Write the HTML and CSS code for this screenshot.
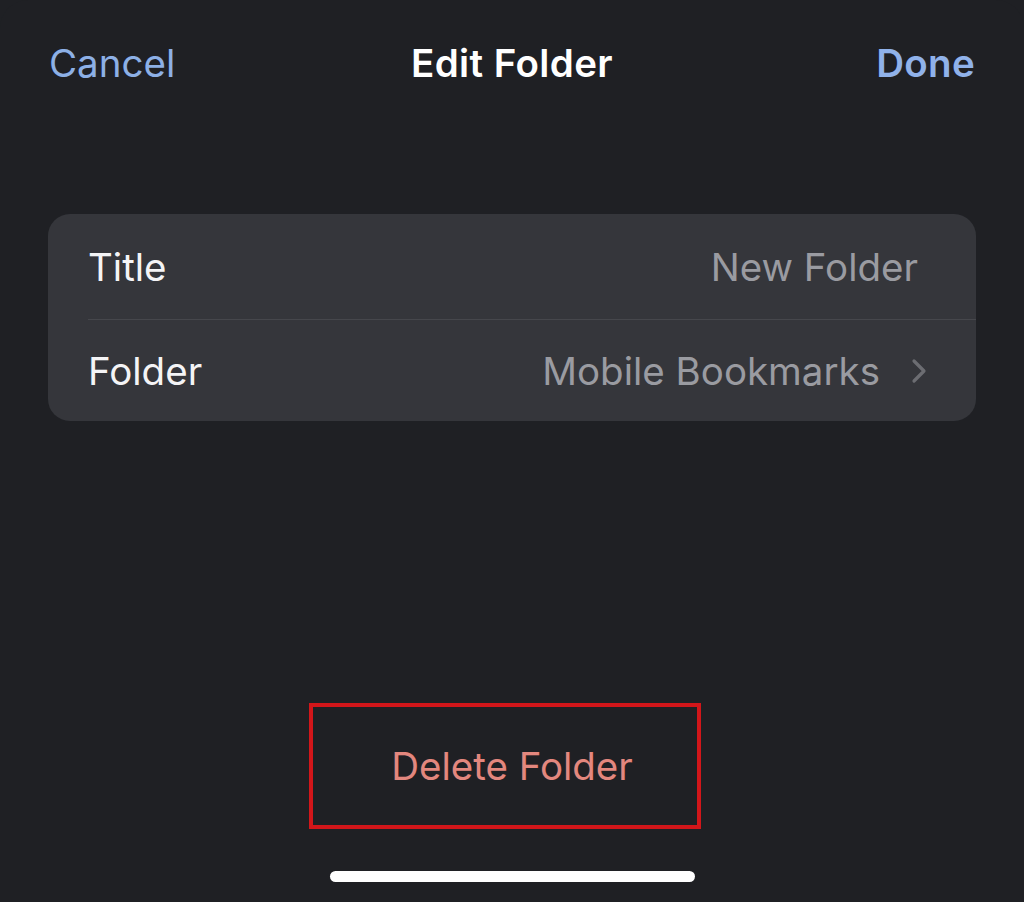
FILE: index.html
```html
<!DOCTYPE html>
<html>
<head>
<meta charset="utf-8">
<link rel="stylesheet" href="styles.css">
</head>
<body>
<div class="sheet">
  <header class="nav">
    <span class="nav-btn cancel">Cancel</span>
    <span class="nav-title">Edit Folder</span>
    <span class="nav-btn done">Done</span>
  </header>
  <section class="card">
    <div class="row row-title">
      <span class="label">Title</span>
      <span class="value">New Folder</span>
    </div>
    <div class="divider"></div>
    <div class="row row-folder">
      <span class="label">Folder</span>
      <span class="value">Mobile Bookmarks</span>
      <svg class="chev" width="18" height="28" viewBox="0 0 18 28"><path d="M4 4 L14 14 L4 24" fill="none" stroke="currentColor" stroke-width="3.2" stroke-linecap="round" stroke-linejoin="round"/></svg>
    </div>
  </section>
  <div class="spacer"></div>
  <div class="delete-box"><span class="delete">Delete Folder</span></div>
  <div class="home"></div>
</div>
</body>
</html>
```
FILE: styles.css
```css
html, body {
  margin: 0;
  padding: 0;
  background: #1f2024;
}
body {
  font-family: Inter, "Noto Sans", sans-serif;
  -webkit-font-smoothing: antialiased;
}
.sheet {
  height: 902px;
  display: flex;
  flex-direction: column;
  align-items: stretch;
  background: #1f2024;
  border-radius: 28px 28px 0 0;
}
.nav {
  height: 126px;
  padding: 0 49px 0 49px;
  display: flex;
  align-items: center;
  justify-content: space-between;
  font-size: 38.5px;
}
.nav-btn {
  color: #8db0e6;
}
.cancel {
  width: 200px;
}
.done {
  width: 200px;
  text-align: right;
  font-weight: 600;
  color: #90b2ea;
  letter-spacing: 0.3px;
}
.nav-title {
  color: #ffffff;
  font-weight: 600;
  letter-spacing: 0.4px;
}
.card {
  margin: 88px 48px 0 48px;
  background: #35363b;
  border-radius: 22px;
  display: flex;
  flex-direction: column;
}
.row {
  display: flex;
  align-items: center;
  padding: 0 48px 0 40px;
  font-size: 38.5px;
}
.row-title {
  height: 105px;
  padding-right: 58px;
}
.row-folder {
  height: 101px;
}
.label {
  color: #f4f4f6;
  flex: 1;
}
.value {
  color: #9a9ba1;
}
.chev {
  color: #6c6d72;
  margin-left: 30px;
}
.divider {
  height: 1px;
  background: #46474c;
  margin-left: 40px;
}
.spacer {
  flex: 1;
}
.delete-box {
  align-self: center;
  box-sizing: border-box;
  width: 392px;
  height: 126px;
  padding-left: 14px;
  border: 4px solid #d2161a;
  display: flex;
  align-items: center;
  justify-content: center;
  margin-right: 14px;
}
.delete {
  color: #e3877e;
  font-size: 38.5px;
}
.home {
  align-self: center;
  width: 365px;
  height: 11px;
  border-radius: 6px;
  background: #ffffff;
  margin: 42px 0 20px 0;
}
```
